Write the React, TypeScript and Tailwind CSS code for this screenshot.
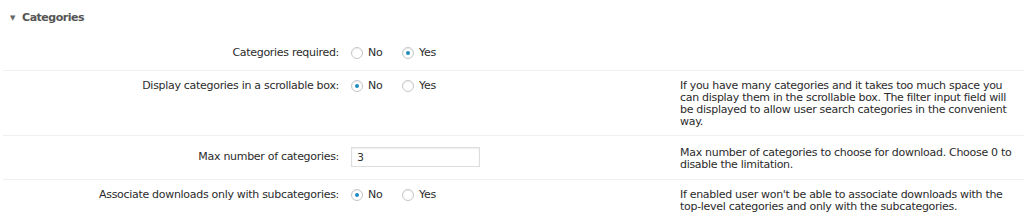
import React from 'react';

const Radio: React.FC<{ checked?: boolean; label: string }> = ({ checked, label }) => (
  <span className="flex items-center">
    <span className="flex h-[12px] w-[12px] items-center justify-center rounded-full border border-[#c3c6c9] bg-white shadow-[inset_0_1px_1px_rgba(0,0,0,0.08)]">
      {checked && <span className="h-[4px] w-[4px] rounded-full bg-[#1e8cbe]" />}
    </span>
    <span className="ml-[5px]">{label}</span>
  </span>
);

const YesNo: React.FC<{ yes: boolean }> = ({ yes }) => (
  <div className="flex items-center">
    <div className="w-[51px]">
      <Radio checked={!yes} label="No" />
    </div>
    <Radio checked={yes} label="Yes" />
  </div>
);

export default function App() {
  return (
    <div
      className="h-[223px] w-[1024px] overflow-hidden bg-white text-[11px] leading-[12px] tracking-[-0.3px] text-[#2b2b2b]"
      style={{ fontFamily: '"DejaVu Sans", Verdana, sans-serif' }}
    >
      <div className="flex h-[37px] items-center pl-[10px] pb-[2px]">
        <span className="mr-[7px] text-[7px] text-[#666]">▼</span>
        <span className="text-[11px] font-bold tracking-[-0.5px] text-[#555]">Categories</span>
      </div>

      <div className="ml-[3px]">
        {/* Categories required */}
        <div className="flex h-[34px] items-center border-b border-[#f0f0f0] pb-[1px]">
          <div className="w-[336px] text-right">Categories required:</div>
          <div className="ml-[12px]">
            <YesNo yes />
          </div>
        </div>

        {/* Scrollable box */}
        <div className="flex items-start border-b border-[#f0f0f0] pt-[9px] pb-[7px]">
          <div className="w-[336px] text-right">Display categories in a scrollable box:</div>
          <div className="ml-[12px] w-[329px]">
            <YesNo yes={false} />
          </div>
          <p className="w-[336px]">
            If you have many categories and it takes too much space you can display them in the scrollable box. The
            filter input field will be displayed to allow user search categories in the convenient way.
          </p>
        </div>

        {/* Max number */}
        <div className="flex items-start border-b border-[#f0f0f0] pt-[11px] pb-[8px]">
          <div className="flex items-center">
            <div className="w-[336px] text-right">Max number of categories:</div>
            <input
              readOnly
              value="3"
              className="ml-[12px] h-[20px] w-[129px] border border-[#dddddd] bg-white px-[5px] text-[11px] text-[#333] shadow-[inset_0_1px_2px_rgba(0,0,0,0.07)] outline-none"
              style={{ fontFamily: '"DejaVu Sans", Verdana, sans-serif' }}
            />
          </div>
          <p className="ml-[200px] w-[336px]">
            Max number of categories to choose for download. Choose 0 to disable the limitation.
          </p>
        </div>

        {/* Subcategories */}
        <div className="flex items-start pt-[9px]">
          <div className="w-[336px] text-right">Associate downloads only with subcategories:</div>
          <div className="ml-[12px] w-[329px]">
            <YesNo yes={false} />
          </div>
          <p className="w-[336px]">
            If enabled user won't be able to associate downloads with the top-level categories and only with the
            subcategories.
          </p>
        </div>
      </div>
    </div>
  );
}
